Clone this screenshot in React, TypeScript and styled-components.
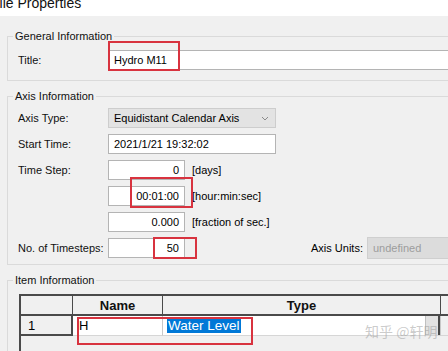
import React from 'react';
import styled, { createGlobalStyle } from 'styled-components';

const GlobalStyle = createGlobalStyle`
  html, body {
    margin: 0;
    padding: 0;
    background: #f0f0f0;
  }
  body {
    font-family: "Liberation Sans", Arial, sans-serif;
    font-size: 11px;
    color: #000;
  }
`;

const timeRows = [
  { value: '0', unit: '[days]', mark: null },
  { value: '00:01:00', unit: '[hour:min:sec]', mark: { left: 22, top: -9, width: 63, height: 31 } },
  { value: '0.000', unit: '[fraction of sec.]', mark: null },
];

const Chevron = () => (
  <svg width="8" height="5" viewBox="0 0 8 5">
    <path d="M1 1 L4 4 L7 1" fill="none" stroke="#8a8a8a" strokeWidth="1" />
  </svg>
);

const App = () => (
  <Root>
    <GlobalStyle />
    <TitleBar>
      <TitleText>File Properties</TitleText>
    </TitleBar>
    <Content>
      <Group $top={13} $bottom={10}>
        <Legend>General Information</Legend>
        <Row $mt={6}>
          <Label>Title:</Label>
          <Field>
            <TextBox $wide>Hydro M11</TextBox>
            <Mark style={{ left: 0, top: -9, width: 72, height: 30 }} />
          </Field>
        </Row>
      </Group>

      <Group $top={8} $bottom={6}>
        <Legend>Axis Information</Legend>
        <Rows>
          <Row>
            <Label>Axis Type:</Label>
            <Combo>
              <span>Equidistant Calendar Axis</span>
              <Chevron />
            </Combo>
          </Row>
          <Row>
            <Label>Start Time:</Label>
            <TextBox $width={168}>2021/1/21 19:32:02</TextBox>
          </Row>
          {timeRows.map((r, i) => (
            <Row key={r.unit}>
              <Label>{i === 0 ? 'Time Step:' : ''}</Label>
              <Field>
                <TextBox $width={77} $right>{r.value}</TextBox>
                {r.mark && <Mark style={r.mark} />}
              </Field>
              <Unit>{r.unit}</Unit>
            </Row>
          ))}
          <Row>
            <Label>No. of Timesteps:</Label>
            <Field>
              <TextBox $width={77} $right>50</TextBox>
              <Mark style={{ left: 45, top: -1, width: 44, height: 22 }} />
            </Field>
            <UnitsLabel>Axis Units:</UnitsLabel>
            <Disabled>undefined</Disabled>
          </Row>
        </Rows>
      </Group>

      <Group $top={8} $bottom={0}>
        <Legend>Item Information</Legend>
        <Table>
          <HeadCell />
          <HeadCell>Name</HeadCell>
          <HeadCell>Type</HeadCell>
          <HeadCell $last />
          <RowHead>1</RowHead>
          <Cell>H</Cell>
          <Cell>
            <Selected>Water Level</Selected>
            <CellGrip />
          </Cell>
          <Cell $last />
          <Mark style={{ left: 56, top: 21, width: 176, height: 28 }} />
          <Watermark>知乎 @轩明</Watermark>
        </Table>
      </Group>
    </Content>
  </Root>
);

const Root = styled.div`
  width: 448px;
  height: 351px;
  overflow: hidden;
  background: #f0f0f0;
`;

const TitleBar = styled.div`
  height: 16px;
  background: #fff;
  overflow: hidden;
`;

const TitleText = styled.div`
  font-size: 14px;
  line-height: 6px;
  margin-left: -9px;
  color: #111;
  white-space: nowrap;
`;

const Content = styled.div`
  padding-left: 7px;
`;

const Group = styled.fieldset<{ $top: number; $bottom: number }>`
  width: 470px;
  margin: ${(p) => p.$top}px 0 0;
  padding: 0 0 ${(p) => p.$bottom}px 10px;
  border: 1px solid #dadada;
  min-inline-size: 0;
`;

const Legend = styled.legend`
  padding: 0 2px;
  margin-left: -5px;
  line-height: 15px;
  color: #111;
`;

const Rows = styled.div`
  display: flex;
  flex-direction: column;
  gap: 6px;
  margin-top: 4px;
`;

const Row = styled.div<{ $mt?: number }>`
  display: flex;
  align-items: center;
  height: 20px;
  margin-top: ${(p) => p.$mt || 0}px;
`;

const Label = styled.div`
  width: 90px;
  flex: none;
  color: #111;
  white-space: nowrap;
`;

const Field = styled.div`
  position: relative;
  display: flex;
`;

const TextBox = styled.div<{ $width?: number; $right?: boolean; $wide?: boolean }>`
  box-sizing: border-box;
  width: ${(p) => (p.$wide ? '360px' : `${p.$width}px`)};
  height: 20px;
  line-height: 18px;
  padding: 0 5px;
  background: #fff;
  border: 1px solid #b4b4b4;
  text-align: ${(p) => (p.$right ? 'right' : 'left')};
  white-space: nowrap;
`;

const Combo = styled.div`
  box-sizing: border-box;
  width: 168px;
  height: 20px;
  display: flex;
  align-items: center;
  justify-content: space-between;
  padding: 0 6px 0 5px;
  background: #e3e3e3;
  border: 1px solid #cdcdcd;
`;

const Unit = styled.div`
  margin-left: 7px;
  white-space: nowrap;
`;

const UnitsLabel = styled.div`
  margin-left: 126px;
  white-space: nowrap;
`;

const Disabled = styled.div`
  box-sizing: border-box;
  width: 110px;
  height: 22px;
  line-height: 20px;
  margin-left: 4px;
  padding: 0 5px;
  background: #dcdcdc;
  border: 1px solid #cfcfcf;
  color: #9c9c9c;
`;

const Mark = styled.div`
  position: absolute;
  box-sizing: border-box;
  border: 2px solid #d8333f;
  pointer-events: none;
`;

const Table = styled.div`
  position: relative;
  display: grid;
  grid-template-columns: 52px 90px 278px 60px;
  grid-auto-rows: 20px;
  align-content: start;
  height: 57px;
  margin: 6px 0 0 1px;
  border-top: 2px solid #4a4a4a;
  border-left: 2px solid #4a4a4a;
  font-size: 13px;
`;

const HeadCell = styled.div<{ $last?: boolean }>`
  display: flex;
  align-items: center;
  justify-content: center;
  background: #f0f0f0;
  border-right: ${(p) => (p.$last ? 'none' : '1px solid #4a4a4a')};
  border-bottom: 2px solid #4a4a4a;
  font-weight: bold;
  color: #111;
`;

const RowHead = styled.div`
  box-sizing: border-box;
  display: flex;
  align-items: center;
  padding-left: 7px;
  background: #f0f0f0;
  border: 2px solid #4a4a4a;
  border-left: none;
  border-top: none;
`;

const Cell = styled.div<{ $last?: boolean }>`
  position: relative;
  display: flex;
  align-items: center;
  padding-left: 6px;
  background: ${(p) => (p.$last ? '#f0f0f0' : '#fff')};
  border-right: 1px solid ${(p) => (p.$last ? 'transparent' : '#c8c8c8')};
  border-bottom: 1px solid #d6d6d6;
`;

const Selected = styled.span`
  background: #0078d7;
  color: #fff;
  line-height: 15px;
  padding: 0 1px;
  margin-left: -2px;
  font-size: 13.5px;
`;

const CellGrip = styled.div`
  position: absolute;
  right: 0;
  top: 0;
  width: 12px;
  height: 19px;
  background: #e2e2e2;
  border-left: 1px solid #c0c0c0;
  border-right: 2px solid #4a4a4a;
`;

const Watermark = styled.div`
  position: absolute;
  left: 344px;
  top: 25px;
  font-family: "Noto Sans CJK SC", "Noto Sans", sans-serif;
  font-size: 14px;
  color: rgba(160, 160, 160, 0.55);
  white-space: nowrap;
  pointer-events: none;
`;

export default App;
